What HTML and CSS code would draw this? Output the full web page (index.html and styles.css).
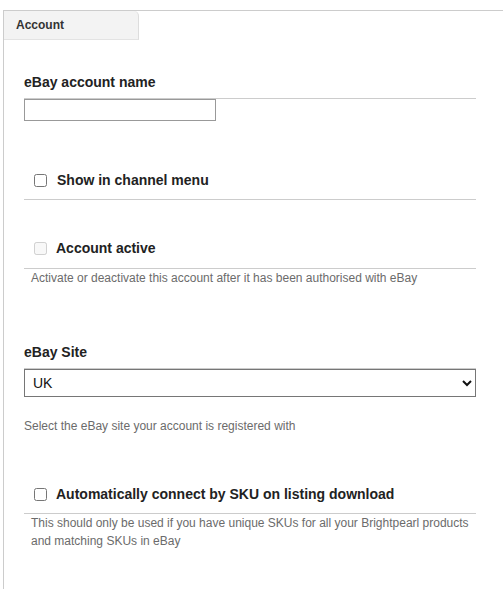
FILE: index.html
```html
<!DOCTYPE html>
<html lang="en">
<head>
    <meta charset="UTF-8">
    <meta name="viewport" content="width=device-width, initial-scale=1.0">
    <title>eBay account</title>
<link rel="stylesheet" href="styles.css">
</head>
<body>

  <div class="panel">
    <div class="tab">Account</div>

    <div class="content">

      <div class="field name-field">
        <label class="heading" for="accountName">eBay account name</label>
        <input id="accountName" class="text-input" type="text">
      </div>

      <div class="field channel-field">
        <label class="heading check-row">
          <input type="checkbox"> <span>Show in channel menu</span>
        </label>
      </div>

      <div class="field active-field">
        <label class="heading check-row">
          <input type="checkbox" disabled> <span class="tight">Account active</span>
        </label>
        <div class="help indent">Activate or deactivate this account after it has been authorised with eBay</div>
      </div>

      <div class="field site-field">
        <label class="heading" for="site">eBay Site</label>
        <select id="site" class="select">
          <option>UK</option>
          <option>US</option>
          <option>Germany</option>
        </select>
        <div class="help site-help">Select the eBay site your account is registered with</div>
      </div>

      <div class="field sku-field">
        <label class="heading check-row">
          <input type="checkbox"> <span class="tighter">Automatically connect by SKU on listing download</span>
        </label>
        <div class="help indent">This should only be used if you have unique SKUs for all your Brightpearl products and matching SKUs in eBay</div>
      </div>

    </div>
  </div>

</body>
</html>
```

FILE: styles.css
```css
body {
  margin: 0;
  padding: 0;
  font-family: "Liberation Sans", Arial, sans-serif;
  color: #333;
  background: #fff;
}

.panel {
  margin: 10px 0 0 3px;
  border-top: 1px solid #ccc;
  border-left: 1px solid #ccc;
  min-height: 578px;
}

.tab {
  width: 122px;
  height: 28px;
  padding-left: 12px;
  line-height: 28px;
  font-size: 12px;
  font-weight: bold;
  color: #333;
  background-color: #f3f3f3;
  border-right: 1px solid #ddd;
  border-bottom: 1px solid #e3e3e3;
  border-top-right-radius: 5px;
}

.content {
  padding: 0 27px 0 20px;
}

.heading {
  display: block;
  font-size: 14px;
  font-weight: bold;
  line-height: 18px;
  color: #222;
  border-bottom: 1px solid #ccc;
}

.check-row {
  display: flex;
  align-items: center;
  padding-left: 10px;
}

.check-row input {
  width: 13px;
  height: 13px;
  margin: 0 9px 0 0;
}

.check-row span {
  padding-left: 1px;
}

.check-row .tight {
  padding-left: 0;
}

.check-row .tighter {
  margin-left: -1px;
}

.name-field {
  margin-top: 33px;
}

.name-field .heading {
  padding-bottom: 7px;
}

.text-input {
  display: block;
  box-sizing: border-box;
  width: 192px;
  height: 22px;
  margin: 0;
  border: 1px solid #999;
  font-size: 13px;
}

.channel-field {
  margin-top: 50px;
}

.channel-field .heading {
  padding-bottom: 10px;
}

.active-field {
  margin-top: 39px;
}

.active-field .heading {
  padding-bottom: 11px;
}

.site-field {
  margin-top: 56px;
}

.site-field .heading {
  padding-bottom: 7px;
}

.select {
  display: block;
  box-sizing: border-box;
  width: 452px;
  height: 28px;
  margin: 0;
  padding: 0 4px;
  border: 1px solid #767676;
  border-radius: 0;
  background: #fff;
  font-family: "Liberation Sans", Arial, sans-serif;
  font-size: 14px;
  color: #111;
}

.help {
  font-size: 12px;
  line-height: 18px;
  color: #6b6b6b;
}

.indent {
  padding-left: 7px;
}

.site-help {
  margin-top: 20px;
}

.sku-field {
  margin-top: 50px;
}

.sku-field .heading {
  padding-bottom: 10px;
}
```
